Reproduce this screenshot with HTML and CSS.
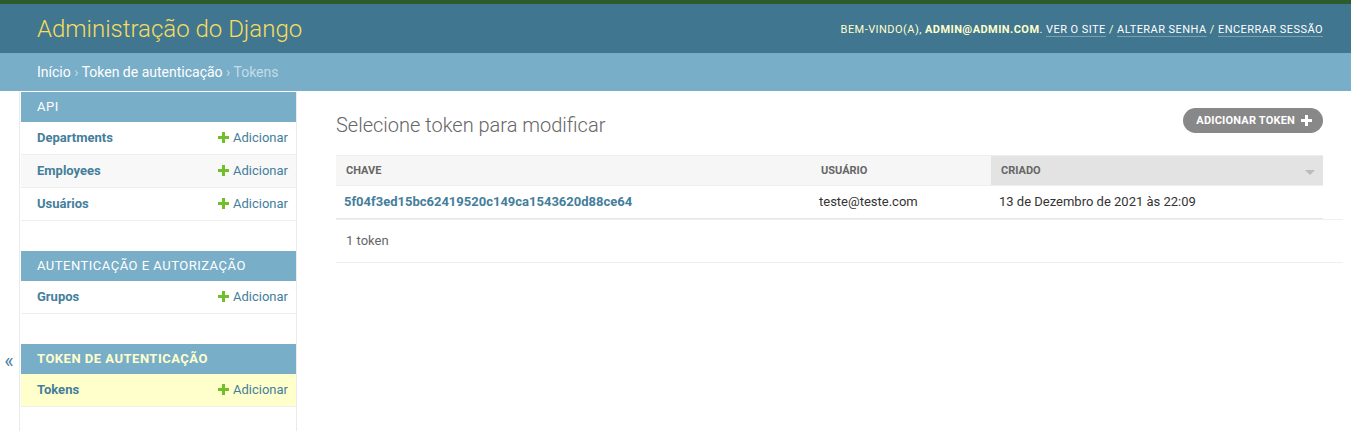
FILE: index.html
```html
<!doctype html>
<html lang="pt-br">
<head>
  <meta charset="utf-8">
  <title>Selecione token para modificar | Administração do Django</title>
  <link rel="stylesheet" href="styles.css">
</head>
<body>
  <div class="topline"></div>
  <div id="header">
    <div id="branding">
      <h1 id="site-name"><a href="#">Administração do Django</a></h1>
    </div>
    <div id="user-tools">
      Bem-vindo(a), <strong>admin@admin.com</strong>.
      <a href="#">Ver o site</a> /
      <a href="#">Alterar senha</a> /
      <a href="#">Encerrar sessão</a>
    </div>
  </div>

  <div class="breadcrumbs">
    <a href="#">Início</a> &rsaquo; <a href="#">Token de autenticação</a> &rsaquo; <span class="current">Tokens</span>
  </div>

  <div class="main">
    <button class="toggle-nav-sidebar" aria-label="Alternar navegação">&laquo;</button>

    <nav id="nav-sidebar">
      <div class="module">
        <table>
          <caption><a href="#">API</a></caption>
          <tr>
            <th><a href="#">Departments</a></th>
            <td><a href="#" class="addlink"><span class="plus"></span>Adicionar</a></td>
          </tr>
          <tr class="alt">
            <th><a href="#">Employees</a></th>
            <td><a href="#" class="addlink"><span class="plus"></span>Adicionar</a></td>
          </tr>
          <tr>
            <th><a href="#">Usuários</a></th>
            <td><a href="#" class="addlink"><span class="plus"></span>Adicionar</a></td>
          </tr>
        </table>
      </div>

      <div class="module">
        <table>
          <caption><a href="#">Autenticação e Autorização</a></caption>
          <tr>
            <th><a href="#">Grupos</a></th>
            <td><a href="#" class="addlink"><span class="plus"></span>Adicionar</a></td>
          </tr>
        </table>
      </div>

      <div class="module current-app">
        <table>
          <caption><a href="#">Token de autenticação</a></caption>
          <tr class="current-model">
            <th><a href="#">Tokens</a></th>
            <td><a href="#" class="addlink"><span class="plus"></span>Adicionar</a></td>
          </tr>
        </table>
      </div>
    </nav>

    <div id="content">
      <div class="content-head">
        <h1>Selecione token para modificar</h1>
        <a href="#" class="object-tool">Adicionar token <span class="plus white"></span></a>
      </div>

      <div id="changelist">
        <table id="result_list">
          <thead>
            <tr>
              <th class="col-key">Chave</th>
              <th class="col-user">Usuário</th>
              <th class="col-created sorted">Criado <span class="sort-arrow"></span></th>
            </tr>
          </thead>
          <tbody>
            <tr>
              <th class="col-key"><a href="#">5f04f3ed15bc62419520c149ca1543620d88ce64</a></th>
              <td>teste@teste.com</td>
              <td>13 de Dezembro de 2021 às 22:09</td>
            </tr>
          </tbody>
        </table>
        <p class="paginator">1 token</p>
      </div>
    </div>
  </div>
</body>
</html>
```

FILE: styles.css
```css
body {
  margin: 0;
  font-family: Roboto, "Liberation Sans", sans-serif;
  font-size: 14px;
  color: #333;
  background: #fff;
}

a {
  color: #447e9b;
  text-decoration: none;
}

/* Header */
.topline {
  height: 4px;
  background: #2c5b2c;
}

#header {
  display: flex;
  justify-content: space-between;
  align-items: center;
  height: 49px;
  padding: 0 28px 0 37px;
  background: #417690;
  color: #ffc;
}

#site-name {
  margin: 0;
  font-size: 24px;
  font-weight: 300;
  line-height: 28px;
}
#site-name a {
  color: #f5dd5d;
}

#user-tools {
  font-size: 11px;
  letter-spacing: 0.45px;
  text-transform: uppercase;
  color: #ffc;
  padding-top: 2px;
}
#user-tools strong {
  font-weight: 700;
}
#user-tools a {
  color: #fff;
  border-bottom: 1px solid rgba(255, 255, 255, 0.3);
}

.breadcrumbs {
  height: 38px;
  box-sizing: border-box;
  padding: 10px 37px;
  background: #79aec8;
  color: #c4dce8;
  font-size: 14px;
  line-height: 18px;
}
.breadcrumbs a {
  color: #fff;
}
.breadcrumbs .current {
  color: #c4dce8;
}

/* Layout */
.main {
  display: flex;
  min-height: 340px;
}

.toggle-nav-sidebar {
  flex: 0 0 20px;
  display: flex;
  justify-content: center;
  align-items: flex-start;
  padding: 258px 1px 0 0;
  border: 0;
  border-right: 1px solid #eaeaea;
  background: #fff;
  color: #447e9b;
  font-size: 20px;
  font-family: Roboto, "Liberation Sans", sans-serif;
  line-height: 24px;
  cursor: pointer;
}

/* Sidebar */
#nav-sidebar {
  flex: 0 0 275px;
  padding-left: 1px;
  border-top: 1px solid transparent;
  border-right: 1px solid #eaeaea;
}

#nav-sidebar .module {
  margin-bottom: 30px;
}

#nav-sidebar table {
  width: 100%;
  border-collapse: collapse;
}

#nav-sidebar caption {
  padding: 7px 16px 7px 16px;
  background: #79aec8;
  font-size: 13px;
  line-height: 16px;
  letter-spacing: 0.5px;
  text-align: left;
  text-transform: uppercase;
}
#nav-sidebar caption a {
  color: #fff;
}
#nav-sidebar .current-app caption a {
  color: #ffc;
  font-weight: 700;
}

#nav-sidebar th,
#nav-sidebar td {
  padding: 8px 8px 8px 16px;
  border-bottom: 1px solid #eee;
  font-size: 13px;
  line-height: 16px;
}
#nav-sidebar th {
  text-align: left;
  font-weight: 700;
}
#nav-sidebar td {
  text-align: right;
  padding-left: 0;
}
#nav-sidebar tr.alt {
  background: #f8f8f8;
}
#nav-sidebar tr.current-model {
  background: #ffc;
}

.addlink {
  white-space: nowrap;
}

.plus {
  display: inline-block;
  position: relative;
  width: 11px;
  height: 11px;
  margin-right: 4px;
  vertical-align: -1px;
}
.plus::before,
.plus::after {
  content: "";
  position: absolute;
  background: #70bf2b;
}
.plus::before {
  left: 4px;
  top: 0;
  width: 3px;
  height: 11px;
}
.plus::after {
  left: 0;
  top: 4px;
  width: 11px;
  height: 3px;
}
.plus.white::before,
.plus.white::after {
  background: #fff;
}

/* Content */
#content {
  flex: 1;
  padding: 17px 8px 20px 39px;
}

.content-head {
  display: flex;
  justify-content: space-between;
  align-items: flex-start;
  margin-right: 20px;
  height: 47px;
}

.content-head h1 {
  margin: 5px 0 0;
  font-size: 20px;
  font-weight: 300;
  line-height: 24px;
  color: #666;
}

.object-tool {
  display: flex;
  align-items: center;
  height: 25px;
  padding: 0 11px 0 13px;
  border-radius: 13px;
  background: #888;
  color: #fff;
  font-size: 11px;
  font-weight: 700;
  letter-spacing: 0.2px;
  text-transform: uppercase;
}
.object-tool .plus {
  margin: 0 0 0 6px;
  vertical-align: 0;
}

#result_list {
  width: calc(100% - 20px);
  border-collapse: collapse;
  border-top: 1px solid #eee;
}

#result_list thead th {
  height: 30px;
  box-sizing: border-box;
  padding: 0 10px;
  background: #f6f6f6;
  border-bottom: 1px solid #eee;
  color: #666;
  font-size: 11px;
  font-weight: 700;
  text-align: left;
  text-transform: uppercase;
  position: relative;
}
#result_list thead th.sorted {
  background: #e3e3e3;
}

.sort-arrow {
  position: absolute;
  right: 8px;
  top: 14px;
  width: 0;
  height: 0;
  border-left: 5px solid transparent;
  border-right: 5px solid transparent;
  border-top: 5px solid #bbb;
}

.col-key {
  width: 475px;
  box-sizing: border-box;
}
.col-user {
  width: 180px;
  box-sizing: border-box;
}

#result_list tbody th,
#result_list tbody td {
  padding: 8px;
  border-bottom: 1px solid #e6e6e6;
  font-size: 13px;
  line-height: 16px;
  text-align: left;
  color: #333;
}
#result_list tbody th {
  font-weight: 700;
}

.paginator {
  margin: 0;
  padding: 10px 10px;
  border-top: 1px solid #f0f0f0;
  border-bottom: 1px solid #eee;
  color: #666;
  font-size: 13px;
  line-height: 22px;
}
```
